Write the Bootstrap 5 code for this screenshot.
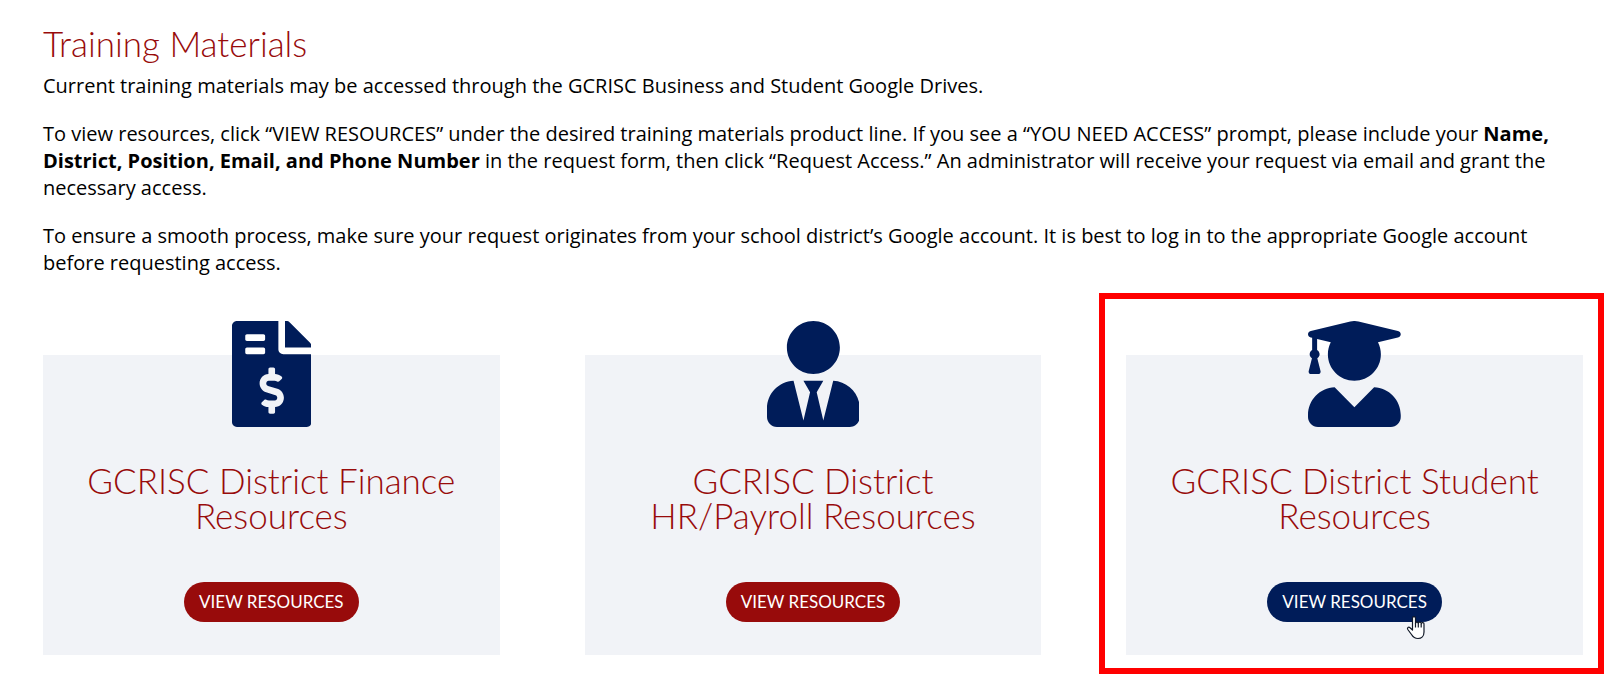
<!DOCTYPE html>
<html lang="en">
<head>
<meta charset="utf-8">
<meta name="viewport" content="width=device-width, initial-scale=1">
<title>Training Materials</title>
<link href="https://cdn.jsdelivr.net/npm/bootstrap@5.3.0/dist/css/bootstrap.min.css" rel="stylesheet">
<style>
  :root { --brand-red: #980b0b; --brand-navy: #001c59; --panel: #f1f3f7; }
  body { font-family: "Open Sans", sans-serif; font-size: 20px; font-weight: 500; line-height: 27px; color: #000; background: #fff; }
  .page { padding: 23px 36px 21px 43px; }
  h1, h2, .btn { font-family: Lato, sans-serif; }
  h1, h2 { color: var(--brand-red); font-weight: 300; font-size: 35px; line-height: 35px; }
  h1 { line-height: 40px; margin-bottom: 9px; }
  p { margin-bottom: 21px; }
  strong { font-weight: 700; }
  .resources { --bs-gutter-x: 85px; --bs-gutter-y: 58px; margin-top: 0; }
  .panel { position: relative; background: var(--panel); padding: 0 32px 33px; }
  .panel svg.icon { height: 106px; margin-top: -34px; margin-bottom: 36px; fill: var(--brand-navy); }
  .panel h2 { margin-bottom: 49px; }
  .btn-view { --bs-btn-color: #fff; --bs-btn-bg: var(--brand-red); --bs-btn-hover-color: #fff; --bs-btn-hover-bg: var(--brand-navy); --bs-btn-border-width: 0; --bs-btn-font-size: 17px; --bs-btn-line-height: 24px; --bs-btn-padding-y: 8px; --bs-btn-padding-x: 15px; }
  .btn-view.hovered { --bs-btn-bg: var(--brand-navy); }
  .highlight { position: absolute; inset: -62px -21px -19px -27px; border: 6px solid #f00; pointer-events: none; }
  .pointer { position: absolute; left: 100%; top: 100%; margin: -7px 0 0 -36px; width: 20px; height: 25px; pointer-events: none; }
</style>
</head>
<body>
<main class="page">
  <h1>Training Materials</h1>
  <p>Current training materials may be accessed through the GCRISC Business and Student Google Drives.</p>
  <p>To view resources, click “VIEW RESOURCES” under the desired training materials product line. If you see a “YOU NEED ACCESS” prompt, please include your <strong>Name, District, Position, Email, and Phone Number</strong> in the request form, then click “Request Access.” An administrator will receive your request via email and grant the necessary access.</p>
  <p>To ensure a smooth process, make sure your request originates from your school district’s Google account. It is best to log in to the appropriate Google account before requesting access.</p>

  <div class="row resources text-center">
    <section class="col-12 col-lg-4">
      <div class="panel h-100 d-flex flex-column align-items-center">
        <svg class="icon" viewBox="0 0 384 512" aria-hidden="true"><path d="M377 105L279.1 7c-4.5-4.5-10.6-7-17-7H256v128h128v-6.1c0-6.3-2.5-12.4-7-16.9zm-153 31V0H24C10.7 0 0 10.7 0 24v464c0 13.3 10.7 24 24 24h336c13.3 0 24-10.7 24-24V160H248c-13.2 0-24-10.8-24-24zM64 72c0-4.42 3.58-8 8-8h80c4.42 0 8 3.58 8 8v16c0 4.42-3.58 8-8 8H72c-4.42 0-8-3.58-8-8V72zm0 80v-16c0-4.42 3.58-8 8-8h80c4.42 0 8 3.58 8 8v16c0 4.42-3.58 8-8 8H72c-4.42 0-8-3.58-8-8zm144 263.88V440c0 4.42-3.58 8-8 8h-16c-4.42 0-8-3.58-8-8v-24.29c-11.29-.58-22.27-4.52-31.37-11.35-3.9-2.93-4.1-8.77-.57-12.14l11.75-11.21c2.77-2.64 6.89-2.76 10.13-.73 3.87 2.42 8.26 3.72 12.82 3.72h28.11c6.5 0 11.8-5.92 11.8-13.19 0-5.95-3.61-11.19-8.77-12.73l-45-13.5c-18.59-5.58-31.58-23.42-31.58-43.39 0-24.52 19.05-44.44 42.67-45.07V232c0-4.42 3.58-8 8-8h16c4.42 0 8 3.58 8 8v24.29c11.29.58 22.27 4.51 31.37 11.35 3.9 2.93 4.1 8.77.57 12.14l-11.75 11.21c-2.77 2.64-6.89 2.76-10.13.73-3.87-2.43-8.26-3.72-12.82-3.72h-28.11c-6.5 0-11.8 5.92-11.8 13.19 0 5.95 3.61 11.19 8.77 12.73l45 13.5c18.59 5.58 31.58 23.42 31.58 43.39 0 24.53-19.05 44.44-42.67 45.07z"/></svg>
        <h2>GCRISC District Finance Resources</h2>
        <button type="button" class="btn btn-view rounded-pill mt-auto">VIEW RESOURCES</button>
      </div>
    </section>
    <section class="col-12 col-lg-4">
      <div class="panel h-100 d-flex flex-column align-items-center">
        <svg class="icon" viewBox="0 0 448 512" aria-hidden="true"><path d="M224 256c70.7 0 128-57.3 128-128S294.7 0 224 0 96 57.3 96 128s57.3 128 128 128zm95.8 32.6L272 480l-32-136 32-56h-96l32 56-32 136-47.8-191.4C56.9 292 0 350.3 0 422.4V464c0 26.5 21.5 48 48 48h352c26.5 0 48-21.5 48-48v-41.6c0-72.1-56.9-130.4-128.2-133.8z"/></svg>
        <h2>GCRISC District<br>HR/Payroll Resources</h2>
        <button type="button" class="btn btn-view rounded-pill mt-auto">VIEW RESOURCES</button>
      </div>
    </section>
    <section class="col-12 col-lg-4">
      <div class="panel h-100 d-flex flex-column align-items-center">
        <svg class="icon" viewBox="0 0 448 512" aria-hidden="true"><path d="M319.4 320.6L224 416l-95.4-95.4C57.1 323.7 0 382.2 0 454.4v9.6c0 26.5 21.5 48 48 48h352c26.5 0 48-21.5 48-48v-9.6c0-72.2-57.1-130.7-128.6-133.8zM13.6 79.8l6.4 1.5v58.4c-7 4.2-12 11.5-12 20.3 0 8.4 4.6 15.4 11.1 19.7L3.5 242c-1.7 6.9 2.1 14 7.6 14h41.8c5.5 0 9.3-7.1 7.6-14l-15.6-62.3C51.4 175.4 56 168.4 56 160c0-8.8-5-16.1-12-20.3V87.1l66 15.9c-8.6 17.2-14 36.4-14 57 0 70.7 57.3 128 128 128s128-57.3 128-128c0-20.6-5.3-39.8-14-57l96.3-23.2c18.2-4.4 18.2-27.1 0-31.5l-190.4-46c-13-3.1-26.7-3.1-39.7 0L13.6 48.2c-18.1 4.4-18.1 27.2 0 31.6z"/></svg>
        <h2>GCRISC District Student Resources</h2>
        <div class="position-relative mt-auto">
          <button type="button" class="btn btn-view hovered rounded-pill d-block">VIEW RESOURCES</button>
          <svg class="pointer" viewBox="0 0 20 25" aria-hidden="true"><path d="M6.500 15V3.200a1.500 1.500 0 0 1 3 0V8.500a1.400 1.400 0 0 1 2.800 0a1.400 1.400 0 0 1 2.900 .3a1.400 1.400 0 0 1 2.800 .6V17c0 4-2.500 6.500-6 6.500c-3.500 0-5-1.500-6.500-4L1.800 14.500c-1-1.800 .8-3 2.200-1.800z" fill="#fff" stroke="#111827" stroke-width="1.200" stroke-linejoin="round"/><path d="M9.500 8v4.500M12.300 8.500v4M15.200 9v3.500" fill="none" stroke="#111827" stroke-width="1.200"/></svg>
        </div>
        <div class="highlight"></div>
      </div>
    </section>
  </div>
</main>
<script src="https://cdn.jsdelivr.net/npm/bootstrap@5.3.0/dist/js/bootstrap.bundle.min.js"></script>
</body>
</html>
